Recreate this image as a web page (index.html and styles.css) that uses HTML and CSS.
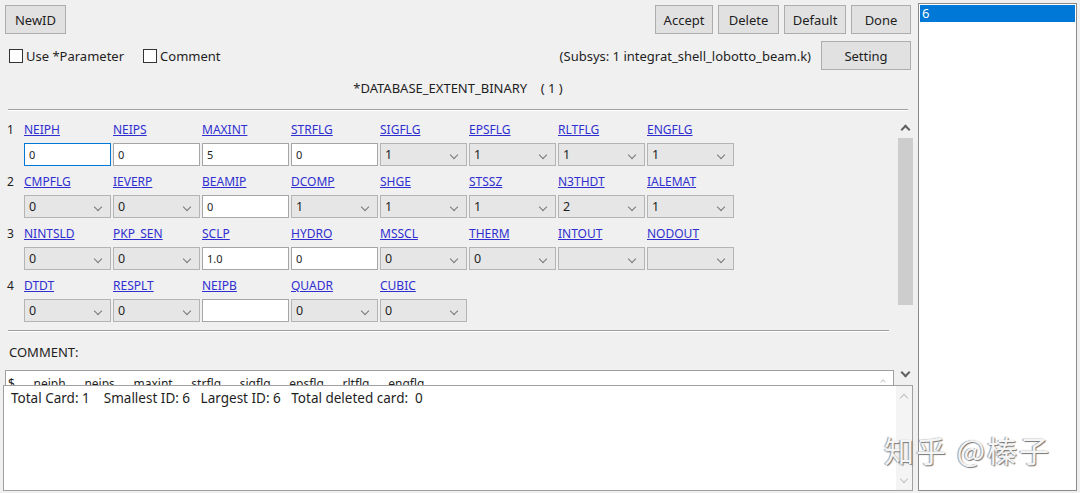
FILE: index.html
```html
<!DOCTYPE html>
<html>
<head>
<meta charset="utf-8">
<link rel="stylesheet" href="styles.css">
</head>
<body>
<div class="app">
  <div class="main">
    <div class="toolbar">
      <button class="btn btn-newid">NewID</button>
      <div class="spacer"></div>
      <button class="btn btn-accept">Accept</button>
      <button class="btn btn-delete">Delete</button>
      <button class="btn btn-default">Default</button>
      <button class="btn btn-done">Done</button>
    </div>
    <div class="optbar">
      <label class="chk"><span class="box"></span>Use *Parameter</label>
      <label class="chk chk2"><span class="box"></span>Comment</label>
      <div class="spacer"></div>
      <span class="subsys">(Subsys: 1 integrat_shell_lobotto_beam.k)</span>
      <button class="btn btn-setting">Setting</button>
    </div>
    <div class="title">*DATABASE_EXTENT_BINARY&nbsp;&nbsp;&nbsp;&nbsp;( 1 )</div>
    <div class="sep"></div>
    <div class="scrollwrap">
      <div class="content">
        <div class="card">
          <span class="num">1</span>
          <a class="lbl">NEIPH</a><a class="lbl">NEIPS</a><a class="lbl">MAXINT</a><a class="lbl">STRFLG</a><a class="lbl">SIGFLG</a><a class="lbl">EPSFLG</a><a class="lbl">RLTFLG</a><a class="lbl">ENGFLG</a>
          <span></span>
          <div class="inp focus">0</div>
          <div class="inp">0</div>
          <div class="inp">5</div>
          <div class="inp">0</div>
          <div class="sel">1<i class="chev"></i></div>
          <div class="sel">1<i class="chev"></i></div>
          <div class="sel">1<i class="chev"></i></div>
          <div class="sel">1<i class="chev"></i></div>
        </div>
        <div class="card">
          <span class="num">2</span>
          <a class="lbl">CMPFLG</a><a class="lbl">IEVERP</a><a class="lbl">BEAMIP</a><a class="lbl">DCOMP</a><a class="lbl">SHGE</a><a class="lbl">STSSZ</a><a class="lbl">N3THDT</a><a class="lbl">IALEMAT</a>
          <span></span>
          <div class="sel">0<i class="chev"></i></div>
          <div class="sel">0<i class="chev"></i></div>
          <div class="inp">0</div>
          <div class="sel">1<i class="chev"></i></div>
          <div class="sel">1<i class="chev"></i></div>
          <div class="sel">1<i class="chev"></i></div>
          <div class="sel">2<i class="chev"></i></div>
          <div class="sel">1<i class="chev"></i></div>
        </div>
        <div class="card">
          <span class="num">3</span>
          <a class="lbl">NINTSLD</a><a class="lbl">PKP_SEN</a><a class="lbl">SCLP</a><a class="lbl">HYDRO</a><a class="lbl">MSSCL</a><a class="lbl">THERM</a><a class="lbl">INTOUT</a><a class="lbl">NODOUT</a>
          <span></span>
          <div class="sel">0<i class="chev"></i></div>
          <div class="sel">0<i class="chev"></i></div>
          <div class="inp">1.0</div>
          <div class="inp">0</div>
          <div class="sel">0<i class="chev"></i></div>
          <div class="sel">0<i class="chev"></i></div>
          <div class="sel"><i class="chev"></i></div>
          <div class="sel"><i class="chev"></i></div>
        </div>
        <div class="card">
          <span class="num">4</span>
          <a class="lbl">DTDT</a><a class="lbl">RESPLT</a><a class="lbl">NEIPB</a><a class="lbl">QUADR</a><a class="lbl">CUBIC</a><span></span><span></span><span></span>
          <span></span>
          <div class="sel">0<i class="chev"></i></div>
          <div class="sel">0<i class="chev"></i></div>
          <div class="inp"></div>
          <div class="sel">0<i class="chev"></i></div>
          <div class="sel">0<i class="chev"></i></div>
        </div>
        <div class="sep2"></div>
        <div class="comment-lbl">COMMENT:</div>
        <div class="comment-box"><div class="ctext">$      neiph      neips      maxint      strflg      sigflg      epsflg      rltflg      engflg</div><i class="cup"></i></div>
      </div>
      <div class="vscroll">
        <i class="arr up"></i>
        <div class="thumb"></div>
        <div class="spacer"></div>
        <i class="arr down"></i>
      </div>
    </div>
    <div class="status">
      <div class="status-text">Total Card: 1&nbsp;&nbsp;&nbsp;&nbsp;Smallest ID: 6&nbsp;&nbsp;&nbsp;Largest ID: 6&nbsp;&nbsp;&nbsp;Total deleted card:&nbsp;&nbsp;0</div>
      <div class="status-scroll">
        <i class="arr up light"></i>
        <div class="spacer"></div>
        <i class="arr down light"></i>
      </div>
    </div>
  </div>
  <div class="idlist">
    <div class="item sel-item">6</div>
  </div>
</div>
<div class="watermark">知乎 @榛子</div>
</body>
</html>
```

FILE: styles.css
```css
html, body {
  margin: 0;
  padding: 0;
}
body {
  width: 1080px;
  height: 493px;
  overflow: hidden;
  background: #f0f0f0;
  font-family: "Noto Sans", "Open Sans", "Noto Sans CJK SC", sans-serif;
  font-size: 13px;
  color: #1e1e1e;
  position: relative;
}
.app {
  display: flex;
  height: 493px;
}
.main {
  width: 913px;
  display: flex;
  flex-direction: column;
}
.spacer { flex: 1; }
.btn {
  font: inherit;
  color: #1e1e1e;
  background: #e1e1e1;
  border: 1px solid #adadad;
  height: 29px;
  padding: 0;
  margin: 0;
  box-sizing: border-box;
}
.toolbar {
  display: flex;
  margin-top: 5px;
  padding-left: 5px;
  padding-right: 2px;
  gap: 5px;
}
.btn-newid { width: 61px; }
.btn-accept { width: 58px; }
.btn-delete { width: 61px; }
.btn-default { width: 62px; }
.btn-done { width: 60px; }
.optbar {
  display: flex;
  align-items: center;
  margin-top: 7px;
  padding-left: 9px;
  padding-right: 2px;
  height: 29px;
}
.chk {
  display: flex;
  align-items: center;
}
.chk2 { margin-left: 19px; }
.box {
  width: 12px;
  height: 12px;
  border: 1px solid #333;
  background: #fff;
  margin-right: 3px;
}
.subsys { margin-right: 10px; }
.btn-setting { width: 90px; }
.title {
  margin-top: 9px;
  height: 18px;
  line-height: 18px;
  text-align: center;
  padding-left: 3px;
}
.sep {
  margin: 12px 5px 0 8px;
  height: 1px;
  background: #a0a0a0;
  border-bottom: 1px solid #fff;
}
.scrollwrap {
  margin-top: 7px;
  height: 267px;
  display: flex;
  overflow: hidden;
}
.content {
  width: 897px;
  padding-top: 4px;
  box-sizing: border-box;
}
.card {
  display: grid;
  grid-template-columns: 15px repeat(8, 87px);
  grid-template-rows: 16px 23px;
  column-gap: 2px;
  row-gap: 5px;
  padding-left: 7px;
  margin-bottom: 8px;
}
.num {
  line-height: 16px;
  font-size: 12px;
}
.lbl {
  color: #2f2fd0;
  text-decoration: underline;
  line-height: 16px;
  font-size: 12px;
  white-space: nowrap;
}
.inp, .sel {
  box-sizing: border-box;
  height: 23px;
  line-height: 21px;
  padding-left: 4px;
  position: relative;
}
.inp {
  background: #fff;
  border: 1px solid #a6a6a6;
  font-size: 11px;
}
.inp.focus { border-color: #0078d7; }
.sel {
  background: #e6e6e6;
  border: 1px solid #b4b4b4;
  font-size: 12.5px;
}
.chev {
  position: absolute;
  right: 9px;
  top: 8px;
  width: 5px;
  height: 5px;
  border-right: 1px solid #777;
  border-bottom: 1px solid #777;
  transform: rotate(45deg);
}
.sep2 {
  margin: 3px 8px 0 8px;
  height: 1px;
  background: #a0a0a0;
  border-bottom: 1px solid #fff;
}
.comment-lbl {
  margin-top: 12px;
  padding-left: 9px;
  line-height: 16px;
}
.comment-box {
  margin: 10px 3px 0 5px;
  height: 50px;
  background: #fff;
  border: 1px solid #a0a0a0;
  position: relative;
  padding-left: 2px;
  padding-top: 5px;
  box-sizing: border-box;
}
.ctext {
  line-height: 16px;
  font-size: 12px;
  white-space: pre;
}
.cup {
  position: absolute;
  right: 8px;
  top: 9px;
  width: 3px;
  height: 3px;
  border-left: 1px solid #ccc;
  border-top: 1px solid #ccc;
  transform: rotate(45deg);
}
.vscroll {
  width: 16px;
  display: flex;
  flex-direction: column;
  align-items: center;
}
.arr {
  display: block;
  width: 5px;
  height: 5px;
  border-left: 2px solid #606060;
  border-top: 2px solid #606060;
}
.arr.up {
  transform: rotate(45deg);
  margin-top: 8px;
  margin-bottom: 5px;
}
.arr.down {
  transform: rotate(225deg);
  margin-bottom: 9px;
}
.arr.light {
  border-color: #c0c0c0;
  border-width: 1px;
}
.thumb {
  width: 15px;
  height: 167px;
  background: #cdcdcd;
}
.status {
  height: 106px;
  margin-left: 3px;
  background: #fff;
  border: 1px solid #a0a0a0;
  box-sizing: border-box;
  display: flex;
}
.status-text {
  flex: 1;
  padding: 4px 0 0 7px;
  line-height: 16px;
  font-size: 13.5px;
}
.status-scroll {
  width: 16px;
  background: #f4f4f4;
  display: flex;
  flex-direction: column;
  align-items: center;
}
.status-scroll .arr.up { margin-top: 9px; }
.status-scroll .arr.down { margin-bottom: 8px; }
.idlist {
  margin: 3px 3px 2px 5px;
  flex: 1;
  background: #fff;
  border: 1px solid #8a8a8a;
  padding: 1px;
}
.item {
  height: 17px;
  line-height: 16px;
  padding-left: 2px;
}
.sel-item {
  background: #0078d7;
  color: #fff;
}
.watermark {
  position: absolute;
  left: 884px;
  top: 431px;
  font-family: "Noto Sans CJK SC", sans-serif;
  font-size: 30px;
  line-height: 36px;
  color: #f4f4f4;
  text-shadow: 1px 1px 1px #777, -1px 0 1px #999;
  letter-spacing: 2px;
  white-space: nowrap;
}
```
